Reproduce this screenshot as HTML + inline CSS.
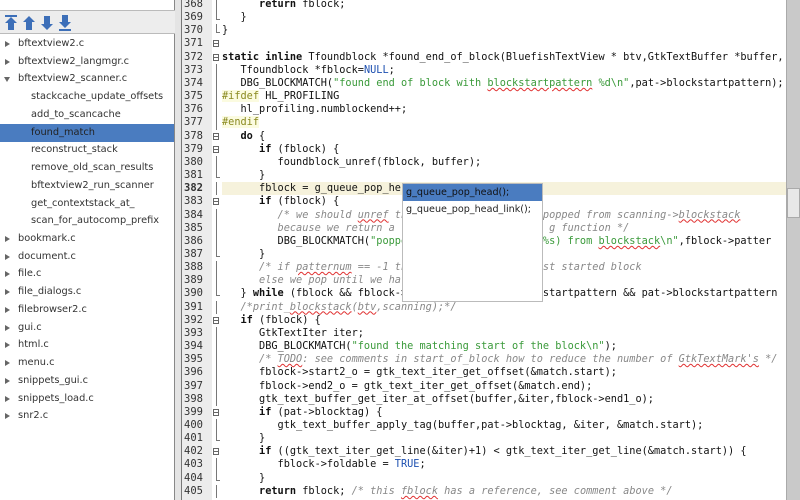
<!DOCTYPE html>
<html><head><meta charset="utf-8"><style>
*{margin:0;padding:0;box-sizing:border-box}
body{width:800px;height:500px;overflow:hidden;background:#fff;position:relative;font-family:"DejaVu Sans","Liberation Sans",sans-serif}
#left{position:absolute;left:0;top:0;width:175px;height:500px;background:#fff;border-right:1px solid #888}
#tb{position:absolute;left:0;top:10px;width:175px;height:24px;background:#ededed;border-top:1px solid #bbb;border-bottom:1px solid #bbb}
.it{position:absolute;left:0;width:174px;height:18px;font-size:9.8px;color:#333;line-height:18px;white-space:nowrap}
.it.sel{background:#4a7cc0;color:#222}
.tri{position:absolute;left:5px;top:6px;width:0;height:0;border-left:5px solid #666;border-top:3.5px solid transparent;border-bottom:3.5px solid transparent}
.tri.open{border-top:5px solid #666;border-left:3.5px solid transparent;border-right:3.5px solid transparent;border-bottom:0;top:7px;left:4px}
#sep{position:absolute;left:175px;top:0;width:6px;height:500px;background:#e4e4e4}
#gut{position:absolute;left:181px;top:0;width:31px;height:500px;background:#ececec;border-left:1px solid #777}
#code{position:absolute;left:181px;top:-2px;width:605px;font-family:"DejaVu Sans Mono","Liberation Mono",monospace;font-size:10.25px;line-height:13.16px;color:#111}
.ln{height:13.16px;white-space:pre;position:relative}
.n{position:absolute;left:3px;width:22px;color:#333;font-size:10.5px}
.t{position:absolute;left:41px}
.cur{background:#f6f2dc}
b{font-weight:bold}
.s{color:#3a9a3a}.c{color:#888;font-style:italic}.p{color:#8a8a20;background:#fbfbe0}.k{color:#1c4fb0}
u{text-decoration:underline wavy #e03030;text-decoration-thickness:1px}
.fm{position:absolute;left:32px;top:3px;width:6px;height:7px;border:1px solid #666;background:#fff}
.fm:after{content:"";position:absolute;left:0;top:2px;width:4px;height:1px;background:#666}
.fl{position:absolute;left:35px;top:0;width:1px;height:13.16px;background:#777}
.fe{position:absolute;left:35px;top:0;width:4px;height:9px;border-left:1px solid #777;border-bottom:1px solid #777}
#sb{position:absolute;left:786px;top:0;width:14px;height:500px;background:#c9c9c9;border-left:1px solid #aaa}
#thumb{position:absolute;left:787px;top:188px;width:13px;height:30px;background:#e8e8e8;border:1px solid #aaa}
#pop{position:absolute;left:402px;top:183px;width:141px;height:119px;background:#fff;border:1px solid #bbb;font-family:"DejaVu Sans","Liberation Sans",sans-serif;font-size:9.6px;color:#222}
#pop div{height:17px;line-height:17px;padding-left:3px}
#pop .ps{background:#4a7cc0;color:#111}
</style></head><body>
<div id="left">
<div id="tb">
<svg width="80" height="22" viewBox="0 0 80 22" style="position:absolute;left:0;top:1px">
<g fill="#3d6fb8">
<rect x="5" y="3" width="12" height="2"/><path d="M11 5 L17 11 L14 11 L14 18 L8 18 L8 11 L5 11Z"/>
<path d="M29 4 L35 10 L32 10 L32 18 L26 18 L26 10 L23 10Z"/>
<path d="M47 18 L53 12 L50 12 L50 4 L44 4 L44 12 L41 12Z"/>
<path d="M65 16 L71 10 L68 10 L68 3 L62 3 L62 10 L59 10Z"/><rect x="59" y="17" width="12" height="2"/>
</g></svg>
</div>
<div class="it" style="top:35px"><span class="tri"></span><span style="margin-left:18px">bftextview2.c</span></div>
<div class="it" style="top:53px"><span class="tri"></span><span style="margin-left:18px">bftextview2_langmgr.c</span></div>
<div class="it" style="top:70px"><span class="tri open"></span><span style="margin-left:18px">bftextview2_scanner.c</span></div>
<div class="it" style="top:88px"><span style="margin-left:31px">stackcache_update_offsets</span></div>
<div class="it" style="top:106px"><span style="margin-left:31px">add_to_scancache</span></div>
<div class="it sel" style="top:124px"><span style="margin-left:31px">found_match</span></div>
<div class="it" style="top:141px"><span style="margin-left:31px">reconstruct_stack</span></div>
<div class="it" style="top:159px"><span style="margin-left:31px">remove_old_scan_results</span></div>
<div class="it" style="top:177px"><span style="margin-left:31px">bftextview2_run_scanner</span></div>
<div class="it" style="top:195px"><span style="margin-left:31px">get_contextstack_at_</span></div>
<div class="it" style="top:212px"><span style="margin-left:31px">scan_for_autocomp_prefix</span></div>
<div class="it" style="top:230px"><span class="tri"></span><span style="margin-left:18px">bookmark.c</span></div>
<div class="it" style="top:248px"><span class="tri"></span><span style="margin-left:18px">document.c</span></div>
<div class="it" style="top:265px"><span class="tri"></span><span style="margin-left:18px">file.c</span></div>
<div class="it" style="top:283px"><span class="tri"></span><span style="margin-left:18px">file_dialogs.c</span></div>
<div class="it" style="top:301px"><span class="tri"></span><span style="margin-left:18px">filebrowser2.c</span></div>
<div class="it" style="top:319px"><span class="tri"></span><span style="margin-left:18px">gui.c</span></div>
<div class="it" style="top:336px"><span class="tri"></span><span style="margin-left:18px">html.c</span></div>
<div class="it" style="top:354px"><span class="tri"></span><span style="margin-left:18px">menu.c</span></div>
<div class="it" style="top:372px"><span class="tri"></span><span style="margin-left:18px">snippets_gui.c</span></div>
<div class="it" style="top:390px"><span class="tri"></span><span style="margin-left:18px">snippets_load.c</span></div>
<div class="it" style="top:407px"><span class="tri"></span><span style="margin-left:18px">snr2.c</span></div>
</div>
<div id="sep"></div>
<div id="gut"></div>
<div id="code">
<div class="ln"><span class="n">368</span><span class="fl"></span><span class="t">      <b>return</b> fblock;</span></div>
<div class="ln"><span class="n">369</span><span class="fe"></span><span class="t">   }</span></div>
<div class="ln"><span class="n">370</span><span class="fe"></span><span class="t">}</span></div>
<div class="ln"><span class="n">371</span><span class="fm"></span><span class="t"></span></div>
<div class="ln"><span class="n">372</span><span class="fm"></span><span class="t"><b>static inline</b> Tfoundblock *found_end_of_block(BluefishTextView * btv,GtkTextBuffer *buffer,</span></div>
<div class="ln"><span class="n">373</span><span class="fl"></span><span class="t">   Tfoundblock *fblock=<span class="k">NULL</span>;</span></div>
<div class="ln"><span class="n">374</span><span class="fl"></span><span class="t">   DBG_BLOCKMATCH(<span class="s">"found end of block with <u>blockstartpattern</u> %d\n"</span>,pat->blockstartpattern);</span></div>
<div class="ln"><span class="n">375</span><span class="fl"></span><span class="t"><span class="p">#ifdef</span> HL_PROFILING</span></div>
<div class="ln"><span class="n">376</span><span class="fl"></span><span class="t">   hl_profiling.numblockend++;</span></div>
<div class="ln"><span class="n">377</span><span class="fl"></span><span class="t"><span class="p">#endif</span></span></div>
<div class="ln"><span class="n">378</span><span class="fm"></span><span class="t">   <b>do</b> {</span></div>
<div class="ln"><span class="n">379</span><span class="fm"></span><span class="t">      <b>if</b> (fblock) {</span></div>
<div class="ln"><span class="n">380</span><span class="fl"></span><span class="t">         foundblock_unref(fblock, buffer);</span></div>
<div class="ln"><span class="n">381</span><span class="fe"></span><span class="t">      }</span></div>
<div class="ln"><span class="n"><b>382</b></span><span class="fl"></span><span class="t cur" style="width:564px">      fblock = g_queue_pop_he</span></div>
<div class="ln"><span class="n">383</span><span class="fm"></span><span class="t">      <b>if</b> (fblock) {</span></div>
<div class="ln"><span class="n">384</span><span class="fl"></span><span class="t"><span class="c">         /* we should <u>unref</u> the block because it is popped from scanning-><u>blockstack</u></span></span></div>
<div class="ln"><span class="n">385</span><span class="fl"></span><span class="t"><span class="c">         because we return a reference to the callin g function */</span></span></div>
<div class="ln"><span class="n">386</span><span class="fl"></span><span class="t">         DBG_BLOCKMATCH(<span class="s">"popped block %p with patt (%s) from <u>blockstack</u>\n"</span>,fblock->patter</span></div>
<div class="ln"><span class="n">387</span><span class="fe"></span><span class="t">      }</span></div>
<div class="ln"><span class="n">388</span><span class="fl"></span><span class="t"><span class="c">      /* if <u>patternum</u> == -1 then we only pop  the last started block</span></span></div>
<div class="ln"><span class="n">389</span><span class="fl"></span><span class="t"><span class="c">      else we pop until we have found the pat<u>rn</u> */</span></span></div>
<div class="ln"><span class="n">390</span><span class="fe"></span><span class="t">   } <b>while</b> (fblock &amp;&amp; fblock->blockstartpat != blockstartpattern &amp;&amp; pat->blockstartpattern</span></div>
<div class="ln"><span class="n">391</span><span class="fl"></span><span class="t"><span class="c">   /*print_<u>blockstack</u>(<u>btv</u>,scanning);*/</span></span></div>
<div class="ln"><span class="n">392</span><span class="fm"></span><span class="t">   <b>if</b> (fblock) {</span></div>
<div class="ln"><span class="n">393</span><span class="fl"></span><span class="t">      GtkTextIter iter;</span></div>
<div class="ln"><span class="n">394</span><span class="fl"></span><span class="t">      DBG_BLOCKMATCH(<span class="s">"found the matching start of the block\n"</span>);</span></div>
<div class="ln"><span class="n">395</span><span class="fl"></span><span class="t"><span class="c">      /* <u>TODO</u>: see comments in start_of_block how to reduce the number of <u>GtkTextMark's</u> */</span></span></div>
<div class="ln"><span class="n">396</span><span class="fl"></span><span class="t">      fblock->start2_o = gtk_text_iter_get_offset(&amp;match.start);</span></div>
<div class="ln"><span class="n">397</span><span class="fl"></span><span class="t">      fblock->end2_o = gtk_text_iter_get_offset(&amp;match.end);</span></div>
<div class="ln"><span class="n">398</span><span class="fl"></span><span class="t">      gtk_text_buffer_get_iter_at_offset(buffer,&amp;iter,fblock->end1_o);</span></div>
<div class="ln"><span class="n">399</span><span class="fm"></span><span class="t">      <b>if</b> (pat->blocktag) {</span></div>
<div class="ln"><span class="n">400</span><span class="fl"></span><span class="t">         gtk_text_buffer_apply_tag(buffer,pat->blocktag, &amp;iter, &amp;match.start);</span></div>
<div class="ln"><span class="n">401</span><span class="fe"></span><span class="t">      }</span></div>
<div class="ln"><span class="n">402</span><span class="fm"></span><span class="t">      <b>if</b> ((gtk_text_iter_get_line(&amp;iter)+1) &lt; gtk_text_iter_get_line(&amp;match.start)) {</span></div>
<div class="ln"><span class="n">403</span><span class="fl"></span><span class="t">         fblock->foldable = <span class="k">TRUE</span>;</span></div>
<div class="ln"><span class="n">404</span><span class="fe"></span><span class="t">      }</span></div>
<div class="ln"><span class="n">405</span><span class="fl"></span><span class="t">      <b>return</b> fblock; <span class="c">/* this <u>fblock</u> has a reference, see comment above */</span></span></div>
</div>
<div id="pop"><div class="ps">g_queue_pop_head();</div><div>g_queue_pop_head_link();</div></div>
<div id="sb"></div><div id="thumb"></div>
</body></html>
